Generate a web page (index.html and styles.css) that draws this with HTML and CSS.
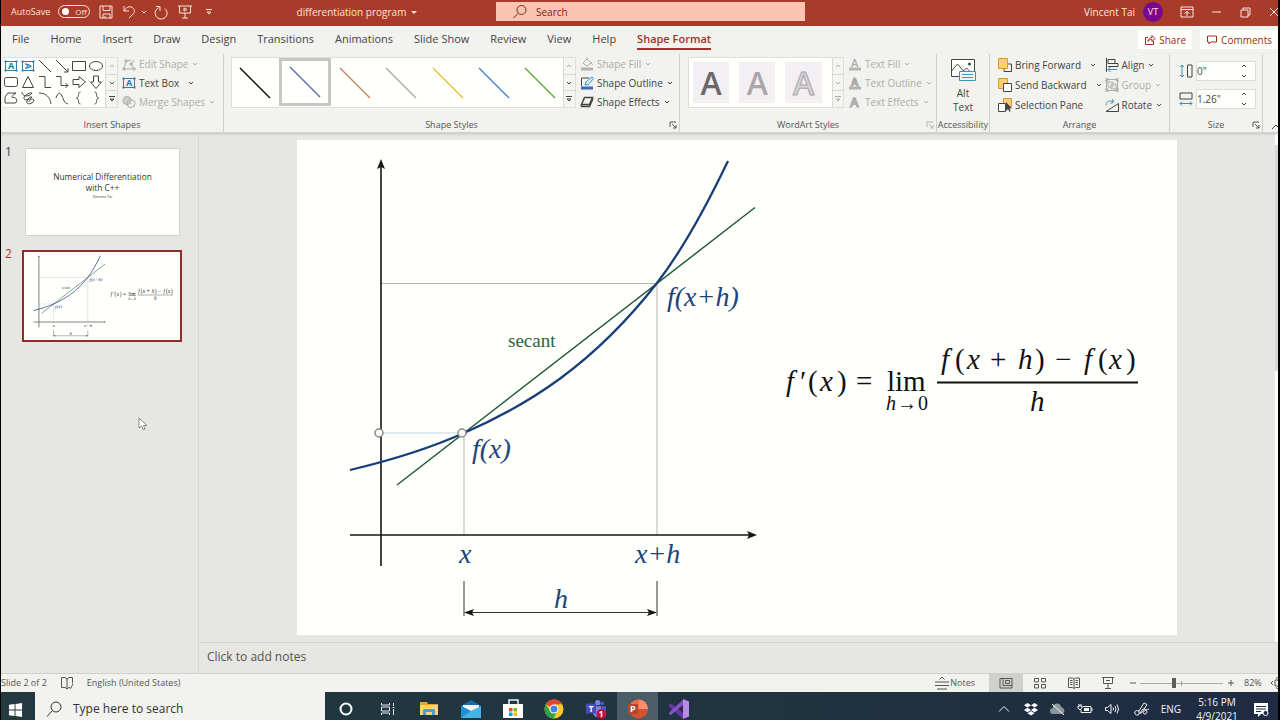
FILE: index.html
```html
<!DOCTYPE html>
<html lang="en">
<head>
<meta charset="utf-8">
<title>differentiation program</title>
<link rel="stylesheet" href="styles.css">
</head>
<body>
<svg class="defs" aria-hidden="true">
  <symbol id="chev" viewBox="0 0 8 8"><path d="M2 3l2 2 2-2"/></symbol>
  <symbol id="chev-up" viewBox="0 0 8 8"><path d="M2 5l2-2 2 2"/></symbol>
  <symbol id="more" viewBox="0 0 8 8"><path d="M1 1.500h6M2 4l2 2 2-2z"/></symbol>
  <symbol id="launcher" viewBox="0 0 8 8"><path d="M1 6V1h6M3 3l4 4M7 4v3H4"/></symbol>
</svg>

<header class="titlebar">
  <div class="quick">
    <span class="autosave" id="as">AutoSave</span>
    <button class="toggle" aria-labelledby="as"><i></i>Off</button>
    <button aria-label="Save"><svg viewBox="0 0 16 16"><path d="M2 2h12v12H2zM5 2v4.500h7V2M5 14v-4h7v4M7 14v-2"/></svg></button>
    <button aria-label="Undo"><svg viewBox="0 0 16 16"><path d="M2 2v5h5M2 7c3-5 7-5 9-3s2 5-1 7l-3 3"/></svg></button>
    <button class="tiny undo-list" aria-label="Undo list"><svg><use href="#chev"/></svg></button>
    <button aria-label="Redo"><svg viewBox="0 0 16 16"><path d="M3 2.500h4V7M6 3.500a6 6 0 1 0 6 1"/></svg></button>
    <button aria-label="Present"><svg viewBox="0 0 16 16"><path d="M1 2h14M2.500 2v7h11V2M8 9v5M5 14h6M7 4v3l3-1.500z"/></svg></button>
    <button class="tiny customize" aria-label="Customize"><svg><use href="#more"/></svg></button>
    <span class="docname">differentiation program <b class="caret"></b></span>
  </div>
  <label class="search"><svg viewBox="0 0 16 16"><circle cx="9.500" cy="6" r="4.500"/><path d="M6 9.500L1.500 14"/></svg><input type="text" placeholder="Search" aria-label="Search"></label>
  <div class="account">
    <span>Vincent Tai</span><span class="avatar">VT</span>
    <button aria-label="Ribbon display"><svg viewBox="0 0 16 16"><path d="M2 3h12v10H2zM2 5.500h12M8 12V7.500M5.500 9.500L8 7.500l2.500 2"/></svg></button>
    <button aria-label="Minimize"><svg viewBox="0 0 16 16"><path d="M4 8h9"/></svg></button>
    <button aria-label="Restore"><svg viewBox="0 0 16 16"><path d="M4 6h7v7H4zM6 6V4h7v7h-2"/></svg></button>
    <button aria-label="Close"><svg viewBox="0 0 16 16"><path d="M4 4l8 8M12 4l-8 8"/></svg></button>
  </div>
</header>

<nav class="tabs">
  <button>File</button><button>Home</button><button>Insert</button><button>Draw</button><button>Design</button><button>Transitions</button><button>Animations</button><button>Slide Show</button><button>Review</button><button>View</button><button>Help</button><button class="active">Shape Format</button>
  <div class="tab-actions">
    <button><svg viewBox="0 0 12 12"><path d="M4 3.500H1.500v7h8V7M4 7.500c0-2.500 2-4 4-4V1.500l3 3-3 3v-2c-2 0-3 .5-4 2z"/></svg>Share</button>
    <button><svg viewBox="0 0 12 12"><path d="M1.500 2h9v6H5L3 10V8H1.500z"/></svg>Comments</button>
  </div>
</nav>

<section class="ribbon">
  <div class="group">
    <div class="group-body">
      <div class="gallery shapes">
        <div class="shape-grid">
          <button aria-label="Text box"><svg viewBox="0 0 16 16"><g class="blue"><path d="M2.500 3.500h11v9h-11z"/><path class="dots" d="M1.500 2.500h2v2h-2zM12.500 2.500h2v2h-2zM1.500 11.500h2v2h-2zM12.500 11.500h2v2h-2z"/></g><text class="blue-a" x="5" y="11">A</text></svg></button>
          <button aria-label="Vertical text box"><svg viewBox="0 0 16 16"><g class="blue"><path d="M2.500 3.500h11v9h-11z"/><path class="dots" d="M1.500 2.500h2v2h-2zM12.500 2.500h2v2h-2zM1.500 11.500h2v2h-2zM12.500 11.500h2v2h-2z"/></g><text class="blue-a" transform="rotate(90 8 8)" x="5" y="11">A</text></svg></button>
          <button aria-label="Line"><svg viewBox="0 0 16 16"><path d="M2 2l12 12"/></svg></button>
          <button aria-label="Arrow"><svg viewBox="0 0 16 16"><path d="M2 2l12 12M14 10v4h-4"/></svg></button>
          <button aria-label="Rectangle"><svg viewBox="0 0 16 16"><path d="M1.500 3.500h13v9h-13z"/></svg></button>
          <button aria-label="Oval"><svg viewBox="0 0 16 16"><ellipse cx="8" cy="8" rx="6.500" ry="4.500"/></svg></button>
          <button aria-label="Rounded rectangle"><svg viewBox="0 0 16 16"><rect x="1.500" y="3.500" width="13" height="9" rx="2"/></svg></button>
          <button aria-label="Triangle"><svg viewBox="0 0 16 16"><path d="M8 2.500L13.500 13.500h-11z"/></svg></button>
          <button aria-label="Elbow"><svg viewBox="0 0 16 16"><path d="M2 2.500h6v11h6"/></svg></button>
          <button aria-label="Elbow arrow"><svg viewBox="0 0 16 16"><path d="M2 2.500h5v9h7M11.500 9l2.500 2.500-2.500 2.500"/></svg></button>
          <button aria-label="Right arrow"><svg viewBox="0 0 16 16"><path d="M2 5.500h6v-3L14.500 8 8 13.500v-3H2z"/></svg></button>
          <button aria-label="Down arrow"><svg viewBox="0 0 16 16"><path d="M5.500 2v6h-3L8 14.500 13.500 8h-3V2z"/></svg></button>
          <button aria-label="Freeform"><svg viewBox="0 0 16 16"><path d="M5 3h8c-4 2-5 5-3 4.500 4-1 5 5.500 2 5.500H2V7z"/></svg></button>
          <button aria-label="Scribble"><svg viewBox="0 0 16 16"><path d="M2 2c0 5 8 5 10 1-4-1-9 4-8 6s8 0 8-2c-3-1-6 4-5 6s7 0 7-3c-2-2-5 0-5 2"/></svg></button>
          <button aria-label="Arc"><svg viewBox="0 0 16 16"><path d="M2 3c7 0 11 4 12 11"/></svg></button>
          <button aria-label="Curve"><svg viewBox="0 0 16 16"><path d="M2 8c2-6 4-6 6-2 2 4 2 7 6 8"/></svg></button>
          <button aria-label="Left brace"><svg viewBox="0 0 16 16"><path d="M9.500 2C6 2 9 7 5.500 8 9 9 6 14 9.500 14"/></svg></button>
          <button aria-label="Right brace"><svg viewBox="0 0 16 16"><path d="M6.500 2C10 2 7 7 10.500 8 7 9 10 14 6.500 14"/></svg></button>
        </div>
        <div class="scroller"><button class="off" aria-label="Up"><svg><use href="#chev-up"/></svg></button><button aria-label="Down"><svg><use href="#chev"/></svg></button><button aria-label="More"><svg><use href="#more"/></svg></button></div>
      </div>
      <div class="commands">
        <button class="off"><svg viewBox="0 0 14 14"><path d="M2 12L4 4l5-1M2 12h10L9 7l3-4M1 11h2v2H1zM11 11h2v2h-2zM3 3h2v2H3zM8 6h2v2H8z"/></svg>Edit Shape<svg class="arrow"><use href="#chev"/></svg></button>
        <button><svg viewBox="0 0 14 14"><g class="blue"><path d="M1.500 2.500h11v9h-11z"/><path class="dots" d="M.5 1.500h2v2h-2zM11.500 1.500h2v2h-2zM.5 10.500h2v2h-2zM11.500 10.500h2v2h-2z"/></g><text class="blue-a" x="4" y="10">A</text></svg>Text Box<svg class="arrow wide"><use href="#chev"/></svg></button>
        <button class="off"><svg viewBox="0 0 14 14"><circle class="greyfill" cx="5" cy="5.500" r="4"/><circle cx="9" cy="8.500" r="4"/></svg>Merge Shapes<svg class="arrow"><use href="#chev"/></svg></button>
      </div>
    </div>
    <div class="group-label">Insert Shapes</div>
  </div>

  <div class="group styles">
    <div class="group-body">
      <div class="gallery lines">
        <button class="l1" aria-label="Line style 1"><svg viewBox="0 0 32 32"><path d="M1 1l30 30"/></svg></button><button class="l2 picked" aria-label="Line style 2"><svg viewBox="0 0 32 32"><path d="M1 1l30 30"/></svg></button><button class="l3" aria-label="Line style 3"><svg viewBox="0 0 32 32"><path d="M1 1l30 30"/></svg></button><button class="l4" aria-label="Line style 4"><svg viewBox="0 0 32 32"><path d="M1 1l30 30"/></svg></button><button class="l5" aria-label="Line style 5"><svg viewBox="0 0 32 32"><path d="M1 1l30 30"/></svg></button><button class="l6" aria-label="Line style 6"><svg viewBox="0 0 32 32"><path d="M1 1l30 30"/></svg></button><button class="l7" aria-label="Line style 7"><svg viewBox="0 0 32 32"><path d="M1 1l30 30"/></svg></button>
        <div class="scroller"><button class="off" aria-label="Up"><svg><use href="#chev-up"/></svg></button><button aria-label="Down"><svg><use href="#chev"/></svg></button><button aria-label="More"><svg><use href="#more"/></svg></button></div>
      </div>
      <div class="commands">
        <button class="off"><svg viewBox="0 0 14 14"><path d="M3 6l4-4 4 4-4 3zM7 2V.5M11 5l1.500 3"/><path class="bar" d="M1 10.500h12v3H1z"/></svg>Shape Fill<svg class="arrow"><use href="#chev"/></svg></button>
        <button><svg viewBox="0 0 14 14"><path d="M9 2H1.500v8"/><path class="pen" d="M5 9l1-3 6-5 1.500 1.500-5 6z"/><path class="bar blue-bar" d="M1 10.500h12v3H1z"/></svg>Shape Outline<svg class="arrow"><use href="#chev"/></svg></button>
        <button><svg viewBox="0 0 14 14"><path class="thick" d="M4.500 2.500h8l-3 7h-8zM1.500 9.500v2h8l3-7v-2"/></svg>Shape Effects<svg class="arrow"><use href="#chev"/></svg></button>
      </div>
    </div>
    <div class="group-label">Shape Styles<button class="launch" aria-label="Format shape"><svg><use href="#launcher"/></svg></button></div>
  </div>

  <div class="group wordart off">
    <div class="group-body">
      <div class="gallery arts">
        <button class="a1">A</button><button class="a2">A</button><button class="a3">A</button>
        <div class="scroller"><button aria-label="Up"><svg><use href="#chev-up"/></svg></button><button aria-label="Down"><svg><use href="#chev"/></svg></button><button aria-label="More"><svg><use href="#more"/></svg></button></div>
      </div>
      <div class="commands">
        <button><svg viewBox="0 0 14 14"><text class="grey-a" x="3" y="10">A</text><path class="bar" d="M1 10.500h12v3H1z"/></svg>Text Fill<svg class="arrow"><use href="#chev"/></svg></button>
        <button><svg viewBox="0 0 14 14"><text class="grey-a hollow" x="3" y="10">A</text><path class="bar" d="M1 10.500h12v3H1z"/></svg>Text Outline<svg class="arrow"><use href="#chev"/></svg></button>
        <button><svg viewBox="0 0 14 14"><text class="grey-a hollow big" x="2" y="12">A</text></svg>Text Effects<svg class="arrow"><use href="#chev"/></svg></button>
      </div>
    </div>
    <div class="group-label">WordArt Styles<button class="launch" aria-label="Format text"><svg><use href="#launcher"/></svg></button></div>
  </div>

  <div class="group access">
    <div class="group-body">
      <button class="alt"><svg viewBox="0 0 26 26"><path class="paper" d="M1.500 2.500h23v17h-23z"/><path d="M1.500 14l6-7 6 7 3-3 5 5"/><circle class="solid" cx="19.500" cy="7" r="1.500"/><path class="note" d="M9.500 14.500h16v9h-16zM12 17.500h11M12 20.500h11"/></svg>Alt<br>Text</button>
    </div>
    <div class="group-label">Accessibility</div>
  </div>

  <div class="group arrange">
    <div class="group-body">
      <div class="commands tall">
        <button><svg viewBox="0 0 14 14"><path d="M10 6h3.500v7.500H6V10"/><path class="gold" d="M.5 .5h9v10h-9z"/></svg>Bring Forward<svg class="arrow wide"><use href="#chev"/></svg></button>
        <button><svg viewBox="0 0 14 14"><path class="gold" d="M.5 .5h9v10h-9z"/><path class="paper" d="M5.500 5.500h8v8h-8z"/></svg>Send Backward<svg class="arrow wide"><use href="#chev"/></svg></button>
        <button><svg viewBox="0 0 14 14"><path class="gold" d="M5.500 .5h8v8h-8z"/><path class="paper" d="M.5 5.500h7v8h-7z"/><path class="solid" d="M8 4v9l2-2 1.500 3 1-1-1-2.500H14z"/></svg>Selection Pane</button>
      </div>
      <div class="commands tall">
        <button><svg viewBox="0 0 14 14"><path d="M1.500 0v14M3 1.500h7v4H3zM3 5.500h10v3H3"/><path class="note" d="M12 11.500H3M5.500 9L3 11.500 5.500 14"/></svg>Align<svg class="arrow"><use href="#chev"/></svg></button>
        <button class="off"><svg viewBox="0 0 14 14"><path d="M1.500 1.500h11v11h-11zM3 4h5v5H3zM6 6h5v5H6zM0 0h3v3H0zM11 0h3v3h-3zM0 11h3v3H0zM11 11h3v3h-3z"/></svg>Group<svg class="arrow"><use href="#chev"/></svg></button>
        <button><svg viewBox="0 0 14 14"><path d="M1 13.500h12.500v-8z"/><path class="note" d="M1 7c0-4 4-5 7-3M5.500 5.500L8.500 4 7.500 1"/></svg>Rotate<svg class="arrow"><use href="#chev"/></svg></button>
      </div>
    </div>
    <div class="group-label">Arrange</div>
  </div>

  <div class="group size">
    <div class="group-body">
      <label><svg viewBox="0 0 14 14"><path d="M8.500 1h4.500v12H8.500z"/><path class="note" d="M3 1v12M1 3l2-2 2 2M1 11l2 2 2-2"/></svg><span class="spin"><input type="text" value='0"' aria-label="Height"><span><svg><use href="#chev-up"/></svg><svg><use href="#chev"/></svg></span></span></label>
      <label><svg viewBox="0 0 14 14"><path d="M1 1h12v6H1z"/><path class="note" d="M1 11.500h12M3 9.500l-2 2 2 2M11 9.500l2 2-2 2"/></svg><span class="spin"><input type="text" value='1.26"' aria-label="Width"><span><svg><use href="#chev-up"/></svg><svg><use href="#chev"/></svg></span></span></label>
    </div>
    <div class="group-label">Size<button class="launch" aria-label="Size options"><svg><use href="#launcher"/></svg></button></div>
  </div>
  <button class="collapse" aria-label="Collapse ribbon"><svg viewBox="0 0 10 8"><path d="M1 6l4-4 4 4"/></svg></button>
</section>

<main class="workspace">
  <aside class="thumbs">
    <button class="thumb"><span>1</span>
      <svg viewBox="0 0 880 495"><g class="cover"><text x="440" y="180">Numerical Differentiation</text><text x="440" y="240">with C++</text><text class="by" x="440" y="282">Vincent Tai</text></g></svg>
    </button>
    <button class="thumb current"><span>2</span>
      <svg viewBox="0 0 880 495"><use href="#slide-content"/></svg>
    </button>
  </aside>
  <div class="editor">
    <div class="canvas">
      <svg class="slide" viewBox="0 0 880 495">
        <g id="slide-content">
          <path class="guide" d="M84 143.500h276M167 293v102M360 143v252"/>
          <path class="guide light" d="M84 293h81"/>
          <path class="dim" d="M167 441v35M360 441v35M168 472.500h191"/>
          <path class="tip" d="M167 472.500l10-3.500-2 3.500 2 3.500zM360 472.500l-10-3.500 2 3.500-2 3.500z"/>
          <path class="axis" d="M84 25v401M53 395h400"/>
          <path class="tip" d="M84 19l-4 10 4-2 4 2zM460 395l-10-4 2 4-2 4z"/>
          <path class="secant" d="M100 345L458 67.500"/>
          <path class="curve" d="M53 330C91 321 129 310 167 293C231 265 296 225 360 143C384 112 408 69 431 21"/>
          <text class="var" x="175" y="318">f(x)</text>
          <text class="var" x="370" y="166">f(x+h)</text>
          <text class="var" x="162" y="423">x</text>
          <text class="var" x="338" y="423">x+h</text>
          <text class="var" x="257" y="468">h</text>
          <text class="secant-label" x="211" y="207">secant</text>
          <g class="formula">
            <text y="251"><tspan x="489" class="it">f</tspan><tspan x="503">′</tspan><tspan x="511">(</tspan><tspan x="523" class="it">x</tspan><tspan x="540">)</tspan><tspan x="559">=</tspan><tspan x="590">lim</tspan></text>
            <text class="sub" y="270"><tspan x="589" class="it">h</tspan><tspan x="600">→</tspan><tspan x="621">0</tspan></text>
            <text y="229"><tspan x="644" class="it">f</tspan><tspan x="658">(</tspan><tspan x="670" class="it">x</tspan><tspan x="693">+</tspan><tspan x="721" class="it">h</tspan><tspan x="738">)</tspan><tspan x="758">−</tspan><tspan x="787" class="it">f</tspan><tspan x="801">(</tspan><tspan x="812" class="it">x</tspan><tspan x="829">)</tspan></text>
            <text class="it" x="733" y="271">h</text>
            <path d="M640 242.500h201"/>
          </g>
        </g>
        <circle class="handle" cx="82" cy="293" r="4"/><circle class="handle" cx="165" cy="293" r="4"/>
      </svg>
      <div class="scrollbar"><i></i><b></b></div>
    </div>
    <div class="notes">Click to add notes</div>
  </div>
  <svg class="pointer" viewBox="0 0 10 14"><path d="M1 1v10l2.500-2 2 4 1.500-1-1.500-3.500H9z"/></svg>
</main>

<footer class="status">
  <span>Slide 2 of 2</span>
  <button class="proof" aria-label="Proofing"><svg viewBox="0 0 14 14"><path d="M7 3L5 1.500H1.500v10H5L7 13l2-1.500M7 3v10M7 3l2-1.500h3.500v6M9 11l1.500 1.500L13 8"/></svg></button>
  <span>English (United States)</span>
  <button class="notes-btn"><svg viewBox="0 0 14 14"><path d="M4.500 3.500L7 1l2.500 2.500M0 6h14M0 9.500h14M2 13h10"/></svg>Notes</button>
  <div class="views">
    <button class="on" aria-label="Normal"><svg viewBox="0 0 14 14"><path d="M1 2.500h12v9.500H1zM4 2.500v7H13M6.500 4.500h4v3h-4z"/></svg></button>
    <button aria-label="Slide sorter"><svg viewBox="0 0 14 14"><path d="M1.500 2.500h4v3.500h-4zM8.500 2.500h4v3.500h-4zM1.500 8.500h4V12h-4zM8.500 8.500h4V12h-4z"/></svg></button>
    <button aria-label="Reading view"><svg viewBox="0 0 14 14"><path d="M7 3L5.500 2h-4v9.500h4L7 12.500l1.500-1h4V2h-4zM7 3v9.500M3 4.500h2.500M3 6.500h2.500M3 8.500h2.500M8.500 4.500H11M8.500 6.500H11M8.500 8.500H11"/></svg></button>
    <button aria-label="Slide show"><svg viewBox="0 0 14 14"><path d="M1 1.500h12M2.500 1.500v6h9v-6M7 7.500v5M4 12.500h6M5 4.500h4"/></svg></button>
  </div>
  <div class="zoom">
    <button aria-label="Zoom out"><svg viewBox="0 0 8 8"><path d="M1 4h6"/></svg></button>
    <input type="range" min="0" max="100" value="40" aria-label="Zoom">
    <button aria-label="Zoom in"><svg viewBox="0 0 8 8"><path d="M1 4h6M4 1v6"/></svg></button>
    <span>82%</span>
    <button class="fit" aria-label="Fit slide"><svg viewBox="0 0 8 12"><path d="M3 4L1 6l2 2M8 3H5v6h3M6 1.500L8 0M6 10.500L8 12"/></svg></button>
  </div>
</footer>

<footer class="taskbar">
  <button class="start" aria-label="Start"><svg viewBox="0 0 16 16"><path fill="#fff" d="M1 3l6-1v6H1zM8 2l7-1v7H8zM1 9h6v6l-6-1zM8 9h7v7l-7-1z"/></svg></button>
  <label class="find"><svg viewBox="0 0 18 18"><circle cx="11" cy="7" r="5"/><path d="M7.500 10.500L2 16.500"/></svg><input type="text" placeholder="Type here to search" aria-label="Type here to search"></label>
  <div class="apps">
    <button aria-label="Cortana"><svg viewBox="0 0 20 20"><circle cx="10" cy="10" r="5.500" fill="none" stroke="#fff" stroke-width="2"/></svg></button>
    <button aria-label="Task view"><svg viewBox="0 0 20 20"><path fill="none" stroke="#e8eeee" d="M3.500 4v2h8V4M3.500 8h8v4h-8zM3.500 16v-2h8v2M15.500 4v3M15.500 10v6M14.500 8.500h2"/></svg></button>
    <button aria-label="File Explorer"><svg viewBox="0 0 20 20"><path fill="#e5a823" d="M1 3h7l1 2h10v11H1z"/><path fill="#f7d76b" d="M1 6h18v10H1z"/><path fill="#4b9fd0" d="M4 16v-5l1-1h10l1 1v5h-3v-3H7v3z"/></svg></button>
    <button aria-label="Mail"><svg viewBox="0 0 20 20"><path fill="#176dae" d="M0 7l10-6 10 6v5H0z"/><path fill="#f5f5f5" d="M2 6h16v8H2z"/><path fill="#45b5e6" d="M0 7l10 5 10-5v12H0z"/><path fill="#1e8fd2" d="M0 19L10 12 0 7z"/></svg></button>
    <button aria-label="Store"><svg viewBox="0 0 20 20"><path fill="none" stroke="#eee" stroke-width="1.500" d="M6 6V1h9v5"/><path fill="#fff" d="M0 5h20v14H0z"/><path fill="#e74c27" d="M6 9h3.500v3.500H6z"/><path fill="#7fba00" d="M10.500 9H14v3.500h-3.500z"/><path fill="#00a4ef" d="M6 13.500h3.500V17H6z"/><path fill="#ffb900" d="M10.500 13.500H14V17h-3.500z"/></svg></button>
    <button aria-label="Chrome"><svg viewBox="0 0 20 20"><circle cx="10" cy="10" r="9.500" fill="#f7c926"/><path fill="#dd4537" d="M10 10L1.800 5.200A9.500 9.500 0 0 1 18.200 5.200L10 5.500z"/><path fill="#2ba24c" d="M1.800 5.200A9.500 9.500 0 0 0 9.500 19.500L13.500 12 10 10 6 12z"/><circle cx="10" cy="10" r="4.500" fill="#fff"/><circle cx="10" cy="10" r="3.500" fill="#4380ed"/></svg></button>
    <button aria-label="Teams"><svg viewBox="0 0 22 22"><circle cx="13" cy="4" r="3" fill="#7b83eb"/><circle cx="18" cy="5" r="2" fill="#5059c9"/><path fill="#7b83eb" d="M8 8h9v9a5 5 0 0 1-9 0z"/><path fill="#5059c9" d="M17 8h5v8h-5z"/><path fill="#464eb8" d="M0 5h11v11H0z"/><text x="3" y="14" class="app-letter">T</text><circle cx="17" cy="16.500" r="5.500" fill="#c4123c"/><text x="14" y="20" class="app-letter">1</text></svg></button>
    <button class="running" aria-label="PowerPoint"><svg viewBox="0 0 20 20"><circle cx="10.500" cy="10" r="9.500" fill="#d35230"/><path fill="#ff8f6b" d="M10.500.5A9.500 9.500 0 0 1 20 10h-9.500z"/><path fill="#ed6c47" d="M10.500.5A9.500 9.500 0 0 0 1 10h9.500z"/><path fill="#b7472a" d="M0 5h10v10H0z"/><text x="2" y="13" class="app-letter">P</text></svg></button>
    <button aria-label="Visual Studio"><svg viewBox="0 0 20 20"><path fill="#6a35ab" d="M0 5.500L2 4.500 14 14v6L0 7.500z"/><path fill="#8a4fc4" d="M0 13.500V15l2 1L15 5V0z"/><path fill="#b98ae8" d="M14 0l6 2.500v15L14 20z"/></svg></button>
  </div>
  <div class="tray">
    <button aria-label="Hidden icons"><svg viewBox="0 0 16 16"><path d="M3 10.500l5-5 5 5"/></svg></button>
    <button aria-label="Dropbox"><svg viewBox="0 0 16 16"><path class="w" d="M4.500 2L8 4.300 4.500 6.600 1 4.300zM11.500 2L15 4.300l-3.500 2.300L8 4.300zM4.500 6.700L8 9l-3.500 2.300L1 9zM11.500 6.700L15 9l-3.500 2.300L8 9zM8 10l3.500 2.300L8 14.500l-3.500-2.200z"/></svg></button>
    <button aria-label="OneDrive"><svg viewBox="0 0 16 16"><path class="cloud" d="M3 13a3 3 0 0 1 0-6 4 4 0 0 1 8-1 4 4 0 0 1 2 7z"/><path d="M2 3l12 11"/></svg></button>
    <button aria-label="Battery"><svg viewBox="0 0 16 16"><path d="M6 5.500h8v6H4V9M15 7v3M1 5h4v2L3 9 1 7zM2 5V3M4 5V3"/><path class="w" d="M7 7h5v3H7z"/></svg></button>
    <button aria-label="Volume"><svg viewBox="0 0 16 16"><path d="M1.500 6.500h2L7 3.500v9l-3.500-3h-2zM9 6.500q1 1.500 0 3M11 5q2 3 0 6M13 3.500q3 4.500 0 9"/></svg></button>
    <button class="ink" aria-label="Ink"><svg viewBox="0 0 16 16"><path d="M5 10l5-8 3 1.500-5 8-3 1zM5 10c-6-2-5 5-1 4 3-1 3-6 6-6s4 5 1 5-2-4 4-5"/></svg></button>
    <span>ENG</span>
    <span class="clock">5:16 PM<br>4/9/2021</span>
    <button aria-label="Notifications"><svg viewBox="0 0 16 16"><path class="w" d="M1 2h14v11H8l-3 3v-3H1z"/><path class="ruled" d="M3 5.500h10M3 8h10M3 10.500h5"/><circle class="moon" cx="12.500" cy="12" r="2.500"/></svg></button>
  </div>
</footer>
</body>
</html>
```

FILE: styles.css
```css
* { box-sizing: border-box; }
body {
  margin: 0;
  height: 100vh;
  display: flex;
  flex-direction: column;
  overflow: hidden;
  background: #e6e6e2;
  border-left: 1px solid #000;
  border-right: 2px solid #000;
  color: #444;
  font: 10px/14px "Open Sans", "Noto Sans", sans-serif;
}
button, input { font: inherit; color: inherit; margin: 0; padding: 0; border: 0; background: none; }
input { min-width: 0; }
svg { fill: none; stroke: currentColor; flex: none; display: block; }
svg text { stroke: none; fill: currentColor; }
.defs { position: absolute; width: 0; height: 0; }
.off { color: #adadaa; }

/* Title bar */
.titlebar { display: grid; grid-template-columns: minmax(0, 495fr) minmax(0, 309fr) minmax(0, 473fr); height: 26px; background: #a93b2b; color: #fbe3da; flex: none; }
.titlebar button { display: flex; }
.titlebar svg { width: 16px; height: 16px; }
.quick { display: flex; align-items: center; padding: 0 79px 3px 10px; gap: 8px; }
.autosave { font-size: 9px; }
.quick .toggle { width: 32px; height: 13px; border: 1px solid #fbe3da; border-radius: 7px; align-items: center; gap: 6px; padding-left: 3px; font-size: 8px; line-height: 11px; }
.toggle i { width: 7px; height: 7px; border-radius: 50%; background: #fff; }
.titlebar .tiny svg { width: 8px; height: 8px; }
.undo-list { margin: 0 -3px 0 -6px; }
.customize { margin-left: 4px; }
.docname { margin-left: auto; white-space: nowrap; }
.caret { display: inline-block; border: 3px solid transparent; border-top-color: currentColor; border-bottom: 0; margin: 0 0 2px 2px; }
.search { display: flex; align-items: center; gap: 8px; margin: 2px 0 5px; padding-left: 16px; background: #f9c4b1; color: #7c2320; }
.search input { flex: 1; }
.search input::placeholder, .find input::placeholder { color: inherit; opacity: 1; }
.account { display: flex; align-items: center; justify-content: flex-end; gap: 13px; padding-bottom: 3px; }
.account button:last-child { margin-right: -4px; }
.avatar { width: 20px; height: 20px; border-radius: 50%; background: #77088c; font-size: 9px; line-height: 20px; text-align: center; margin: 0 3px 0 -5px; }

/* Tabs */
.tabs { display: flex; align-items: center; gap: 21px; height: 27px; padding-left: 11px; background: #f2f2ee; font-size: 11px; flex: none; }
.tabs > button { white-space: nowrap; height: 21px; border-bottom: 2px solid transparent; }
.tabs .active { color: #a0322a; font-weight: 600; border-color: #a0322a; }
.tab-actions { margin-left: auto; display: flex; gap: 8px; color: #9c2a26; }
.tab-actions button { display: flex; align-items: center; gap: 3px; height: 19px; padding: 0 6px; background: #fffffc; font-size: 10px; font-weight: 500; }
.tab-actions svg { width: 12px; height: 12px; }

/* Ribbon */
.ribbon { display: grid; grid-template-columns: minmax(0, 223fr) minmax(0, 456fr) minmax(0, 257fr) minmax(0, 53fr) minmax(0, 180fr) minmax(0, 93fr) minmax(0, 15fr); height: 80px; padding-top: 1px; background: #f2f2ee; border-bottom: 1px solid #d0d0cc; box-shadow: 0 1px 2px #c6c6c2; flex: none; z-index: 1; }
.group { display: flex; flex-direction: column; min-width: 0; border-right: 1px solid #cfcfcb; }
.group-body { flex: 1; display: flex; padding-left: 2px; }
.group-label { position: relative; height: 14px; text-align: center; font-size: 9px; color: #555; white-space: nowrap; }
.group.off .launch { color: #b5b5b2; }
.launch { position: absolute; right: 2px; top: 3px; }
.launch svg { width: 8px; height: 8px; }
.gallery { display: flex; height: 51px; margin-top: 3px; background: #fffffc; border: 1px solid #dededa; }
.shapes { border-left: 0; }
.shape-grid { display: grid; grid-template-columns: repeat(6, 17px); grid-template-rows: repeat(3, 16px); }
.shape-grid svg { width: 16px; height: 16px; }
.scroller { width: 12px; display: flex; flex-direction: column; background: #f4f4f1; }
.scroller button { flex: 1; display: grid; place-items: center; border: 1px solid #d8d8d4; border-width: 1px 0 0 1px; }
.scroller button:first-child { border-top: 0; }
.scroller svg, .arrow { width: 8px; height: 8px; }
.blue { stroke: #3b7ca3; }
.blue .dots { fill: #3b7ca3; stroke: none; }
svg .blue-a { fill: #257bab; font-size: 9px; font-weight: 700; }
svg .grey-a { font-size: 11px; font-weight: 600; }
svg .hollow { fill: #dededb; stroke: #a5a5a2; stroke-width: 1px; }
svg .big { font-size: 13px; }
.commands { display: flex; flex-direction: column; padding-left: 4px; }
.commands button { display: flex; align-items: center; gap: 3px; height: 19px; white-space: nowrap; }
.commands svg:first-child { width: 14px; height: 14px; }
.commands .wide { margin-left: 5px; }
.bar { fill: #b4b4b4; stroke: none; }
.blue-bar { fill: #3d68b2; }
.pen { fill: #dff0fa; stroke: #3291c7; }
.thick { stroke-width: 1.5px; }
.greyfill { fill: #cfcfcc; }
.paper { fill: #fffffc; }
.gold { fill: #fbcd77; stroke: #d39a32; }
.note { fill: #f2f2ee; stroke: #3a92bb; }
.solid { fill: currentColor; stroke: none; }
.styles .group-body { padding-left: 7px; }
.lines { flex: 1; max-width: 345px; }
.lines > button { flex: 1; display: grid; place-items: center; }
.lines > button svg { width: 32px; height: 32px; stroke-width: 1.5px; }
.lines .picked { border: 3px solid #c5c8c4; margin: 0 1px 1px; }
.lines .l1 { color: #111; }
.lines .l2 { color: #5470ad; }
.lines .l3 { color: #c5875f; }
.lines .l4 { color: #ababa8; }
.lines .l5 { color: #e5c33e; }
.lines .l6 { color: #4c88c3; }
.lines .l7 { color: #69a650; }
.wordart .group-body { padding-left: 8px; }
.wordart .group-body, .wordart .commands { color: #adadaa; }
.arts { gap: 10px; padding: 4px 0 4px 4px; width: 156px; }
.arts > button { width: 38px; background: #f3eff2; font-size: 32px; line-height: 40px; font-weight: 600; }
.arts .scroller { margin: -4px 0 -4px auto; }
.arts .a1 { color: #6b686b; }
.arts .a2 { color: #aaa6aa; }
.arts .a3 { color: #d6d2d6; -webkit-text-stroke: 1px #aaa6aa; }
.access .group-body { justify-content: center; padding: 3px 0 0; }
.alt { align-self: flex-start; line-height: 14px; }
.alt svg { width: 26px; height: 26px; margin: 0 auto 3px; }
.arrange .group-body { padding-left: 4px; }
.tall { padding-top: 1px; }
.tall button { height: 20px; }
.tall:last-child { padding-left: 2px; }
.size .group-body { flex-direction: column; padding: 7px 6px 0 9px; gap: 8px; }
.size label { display: flex; gap: 3px; align-items: center; }
.size label > svg { width: 14px; height: 14px; }
.spin { flex: 1; min-width: 0; display: flex; height: 20px; background: #fffffc; border: 1px solid #dcdcd8; }
.spin input { flex: 1; width: 20px; }
.spin span { width: 15px; display: flex; flex-direction: column; justify-content: space-between; }
.spin svg { width: 8px; height: 8px; }
.collapse { align-self: end; margin-left: 8px; }
.collapse svg { width: 10px; height: 10px; }

/* Workspace */
.workspace { position: relative; flex: 1; min-height: 0; display: flex; }
.thumbs { width: 198px; padding: 15px 16px 0 4px; display: flex; flex-direction: column; gap: 14px; border-right: 1px solid #d7d7d3; flex: none; }
.thumb { display: flex; align-items: flex-start; gap: 13px; text-align: left; font-size: 12px; line-height: 12px; }
.thumb span { width: 7px; flex: none; margin-top: -2px; }
.thumb svg { flex: 1; min-width: 0; background: #fffffc; border: 1px solid #d2d2ce; margin-right: 2px; }
.thumb.current { color: #b03a2e; gap: 10px; }
.thumb.current svg { border: 2px solid #8f2f27; margin-right: 0; }
.cover { color: #333; text-anchor: middle; font-size: 48px; }
.cover .by { font-size: 22px; }
.editor { flex: 1; min-width: 0; display: flex; flex-direction: column; }
.canvas { position: relative; flex: 1; min-height: 0; padding: 7px 101px 0 98px; }
.slide { width: 100%; background: #fffffc; }
.scrollbar { position: absolute; top: 0; right: 0; bottom: 0; width: 3px; display: flex; flex-direction: column; background: #fffffc; }
.scrollbar i { flex: 5; margin-top: 12px; background: #d8d8d5; }
.scrollbar b { flex: 6; }
.notes { height: 31px; flex: none; border-top: 1px solid #cfcfcb; padding: 7px 8px; font-size: 12px; color: #555; }
.pointer { position: absolute; left: 137px; top: 284px; width: 10px; height: 14px; fill: #fff; stroke: #888; }

/* Slide drawing */
.slide { --fine: 1px; --axis: 1.6px; --curve: 2.3px; --secant: 1.4px; }
.thumb { --fine: 2px; --axis: 3px; --curve: 4px; --secant: 3px; }
.guide { stroke: #b3b6bb; stroke-width: var(--fine); }
.light { stroke: #bfd5e5; }
.dim { stroke: #333; stroke-width: var(--fine); }
.axis { stroke: #161616; stroke-width: var(--axis); }
.tip { fill: #161616; stroke: none; }
.secant { stroke: #1c5632; stroke-width: var(--secant); }
.curve { stroke: #193f78; stroke-width: var(--curve); }
svg .var { fill: #1d447b; font: italic 28px "Liberation Serif", serif; }
svg .secant-label { fill: #2b6341; font: 19px "Liberation Serif", serif; }
.formula { color: #111; font: 29px "Liberation Serif", serif; }
.formula path { stroke: #111; stroke-width: 2px; }
.formula .it { font-style: italic; }
.formula .sub { font-size: 20px; }
.handle { fill: #fff; stroke: #888; stroke-width: 1.5px; }

/* Status bar */
.status { display: flex; align-items: center; height: 19px; background: #f2f2ee; border-top: 1px solid #cfcfcb; font-size: 9px; flex: none; color: #555; }
.status span { white-space: nowrap; }
.status svg { width: 14px; height: 14px; }
.proof { margin: 0 13px; }
.notes-btn { display: flex; align-items: center; gap: 1px; margin-left: auto; margin-right: 14px; }
.views { display: flex; align-self: stretch; }
.views button { width: 34px; display: grid; place-items: center; }
.views .on { background: #d0d0cc; }
.zoom { display: flex; align-items: center; }
.zoom button { width: 15px; display: grid; place-items: center; }
.zoom button svg { width: 8px; height: 8px; }
.zoom input { appearance: none; width: 83px; height: 10px; background: linear-gradient(#aaa, #aaa) center / 100% 1px no-repeat, linear-gradient(#999, #999) center / 1px 5px no-repeat; }
.zoom input::-webkit-slider-thumb { appearance: none; width: 4px; height: 10px; background: #5c5c5a; }
.zoom span { margin-left: 6px; width: 26px; }
.zoom .fit { width: 8px; }
.zoom .fit svg { height: 12px; }

/* Taskbar */
.taskbar { display: flex; align-items: flex-start; height: 28px; overflow: hidden; background: linear-gradient(90deg, #223a40, #1f3340 60%, #1f2b43); color: #f3f3f3; flex: none; }
.taskbar > * { height: 34px; }
.start { width: 34px; display: grid; place-items: center; padding-right: 6px; }
.start svg { width: 15px; height: 15px; stroke: none; }
.find { display: flex; align-items: center; width: 290px; padding-left: 10px; gap: 10px; background: #f2f2ee; color: #333; font-size: 12px; }
.find svg { width: 18px; height: 18px; }
.find input { flex: 1; }
.apps { display: flex; width: 375px; }
.apps button { flex: 1; display: grid; place-items: center; }
.apps svg { width: 20px; height: 20px; stroke: none; overflow: visible; }
.apps .running { background: #4b5d66; }
svg .app-letter { fill: #fff; font-size: 9px; font-weight: 700; }
.tray { margin-left: auto; display: flex; align-items: center; gap: 11px; padding-right: 9px; }
.tray svg { width: 16px; height: 16px; }
.tray .ink { margin-left: 3px; }
.tray .w { fill: #fff; stroke: none; }
.cloud { fill: #8d979d; stroke: none; }
.ruled { stroke: #1f2b43; }
.moon { fill: #1f2b43; stroke: #fff; }
.clock { width: 50px; text-align: center; }
```
